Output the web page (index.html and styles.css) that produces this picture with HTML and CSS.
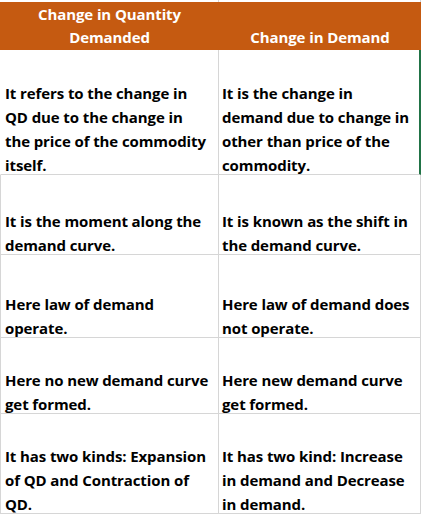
FILE: index.html
```html
<!DOCTYPE html>
<html lang="en">
<head>
<meta charset="utf-8">
<title>Change in Quantity Demanded vs Change in Demand</title>
<link rel="stylesheet" href="styles.css">
</head>
<body>
<div class="sheet">
  <div class="cell strip c1"></div>
  <div class="cell strip c2"></div>

  <div class="cell head c1"><p class="txt">Change in Quantity<br>Demanded</p></div>
  <div class="cell head c2"><p class="txt">Change in Demand</p></div>

  <div class="cell r1 c1 first"><p class="txt">It refers to the change in<br>QD due to the change in<br>the price of the commodity<br>itself.</p></div>
  <div class="cell r1 c2 selected"><p class="txt">It is the change in<br>demand due to change in<br>other than price of the<br>commodity.</p></div>

  <div class="cell r2 c1"><p class="txt">It is the moment along the<br>demand curve.</p></div>
  <div class="cell r2 c2"><p class="txt">It is known as the shift in<br>the demand curve.</p></div>

  <div class="cell r3 c1"><p class="txt">Here law of demand<br>operate.</p></div>
  <div class="cell r3 c2"><p class="txt">Here law of demand does<br>not operate.</p></div>

  <div class="cell r4 c1"><p class="txt">Here no new demand curve<br>get formed.</p></div>
  <div class="cell r4 c2"><p class="txt">Here new demand curve<br>get formed.</p></div>

  <div class="cell r5 c1"><p class="txt">It has two kinds: Expansion<br>of QD and Contraction of<br>QD.</p></div>
  <div class="cell r5 c2"><p class="txt">It has two kind: Increase<br>in demand and Decrease<br>in demand.</p></div>
</div>
</body>
</html>
```

FILE: styles.css
```css
html, body {
  margin: 0;
  padding: 0;
  background: #ffffff;
}

.sheet {
  display: grid;
  grid-template-columns: 219px 202px;
  grid-template-rows: 2px 48px 125px 80px 83px 76px 100px;
  width: 421px;
  font-family: "Open Sans", "Liberation Sans", sans-serif;
  font-weight: 700;
  font-size: 15px;
  letter-spacing: -0.1px;
  color: #000000;
}

.cell {
  box-sizing: border-box;
  display: flex;
  flex-direction: column;
  justify-content: flex-end;
  white-space: nowrap;
  line-height: 24px;
  border-right: 1px solid #d6d6d6;
  border-bottom: 1px solid #d6d6d6;
  overflow: hidden;
}

.txt {
  margin: 0 0 -3px 0;
}

.c1 {
  padding-left: 4px;
  border-left: 1px solid #d6d6d6;
}

.c2 {
  padding-left: 3px;
}

.strip {
  border-bottom: none;
  border-left: none;
}

.head {
  background: #c55a11;
  color: #ffffff;
  text-align: center;
  align-items: center;
  padding-left: 0;
  line-height: 23px;
  border: none;
}

.head .txt {
  margin: 0 0 1px 0;
}

.first {
  border-left-color: transparent;
}

.selected {
  border-right: 2px solid #217346;
}
```
